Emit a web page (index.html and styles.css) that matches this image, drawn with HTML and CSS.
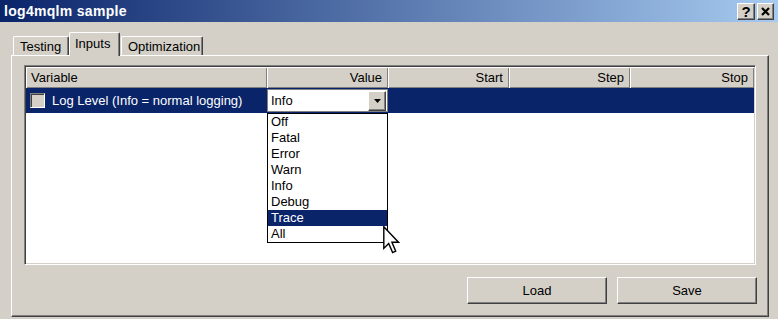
FILE: index.html
```html
<!DOCTYPE html>
<html>
<head>
<meta charset="utf-8">
<link rel="stylesheet" href="styles.css">
</head>
<body>
<div class="window">
  <div class="titlebar">
    <span class="title">log4mqlm sample</span>
    <div class="tb-buttons">
      <div class="tb-btn help">?</div>
      <div class="tb-btn close">
        <svg width="9" height="9" viewBox="0 0 9 9"><path d="M1 1 L8 8 M8 1 L1 8" stroke="#000" stroke-width="2.2"/></svg>
      </div>
    </div>
  </div>
  <div class="client">
    <div class="tabs">
      <div class="tab t-testing">Testing</div>
      <div class="tab active t-inputs">Inputs</div>
      <div class="tab t-opt">Optimization</div>
    </div>
    <div class="panel">
      <div class="listview">
        <div class="header">
          <div class="hcell left">Variable</div>
          <div class="hcell">Value</div>
          <div class="hcell">Start</div>
          <div class="hcell">Step</div>
          <div class="hcell">Stop</div>
        </div>
        <div class="row selected">
          <div class="cell var">
            <span class="checkbox"></span>
            <span>Log Level (Info = normal logging)</span>
          </div>
          <div class="cell val">
            <div class="combo">
              <span class="combo-text">Info</span>
              <span class="combo-btn">
                <svg width="7" height="4" viewBox="0 0 7 4"><path d="M0 0 H7 L3.5 4 Z" fill="#000"/></svg>
              </span>
            </div>
            <ul class="droplist">
              <li>Off</li>
              <li>Fatal</li>
              <li>Error</li>
              <li>Warn</li>
              <li>Info</li>
              <li>Debug</li>
              <li class="hl">Trace</li>
              <li>All</li>
            </ul>
            <svg class="cursor" width="17" height="28" viewBox="0 0 12 20">
              <path d="M0.5 0.5 L0.5 16 L4 12.5 L6.8 19 L9 18 L6.3 11.6 L11 11.6 Z" fill="#fff" stroke="#000" stroke-width="1" stroke-linejoin="miter"/>
            </svg>
          </div>
          <div class="cell"></div>
          <div class="cell"></div>
          <div class="cell"></div>
        </div>
      </div>
      <div class="buttons">
        <div class="button">Load</div>
        <div class="button">Save</div>
      </div>
    </div>
  </div>
</div>
</body>
</html>
```
FILE: styles.css
```css
* { box-sizing: border-box; }
html, body { margin: 0; padding: 0; }
body {
  font-family: "Liberation Sans", Arial, sans-serif;
  font-size: 13px;
  color: #000;
  background: #d4d0c8;
}
.window {
  width: 778px;
  height: 319px;
  background: #d4d0c8;
  display: flex;
  flex-direction: column;
  overflow: hidden;
}
.titlebar {
  height: 22px;
  flex: none;
  background: linear-gradient(to right, #0a246a 0%, #a6caf0 100%);
  display: flex;
  align-items: center;
  justify-content: space-between;
  padding: 0 4px 0 4px;
}
.title {
  color: #fff;
  font-weight: bold;
  font-size: 14px;
  letter-spacing: 0.3px;
}
.tb-buttons {
  display: flex;
  gap: 2px;
}
.tb-btn {
  width: 18px;
  height: 17px;
  background: #d4d0c8;
  border-top: 1px solid #fff;
  border-left: 1px solid #fff;
  border-right: 1px solid #404040;
  border-bottom: 1px solid #404040;
  box-shadow: inset -1px -1px 0 #808080;
  display: flex;
  align-items: center;
  justify-content: center;
  font-weight: bold;
  font-size: 15px;
  line-height: 1;
}
.tb-btn.close { width: 17px; }
.client {
  flex: 1;
  padding: 10px 9px 2px 11px;
  display: flex;
  flex-direction: column;
}
.tabs {
  height: 23px;
  flex: none;
  display: flex;
  align-items: flex-end;
  padding-left: 2px;
}
.tab {
  height: 19px;
  background: #d4d0c8;
  border-top: 1px solid #fff;
  border-left: 1px solid #fff;
  border-right: 1px solid #404040;
  box-shadow: inset -1px 0 0 #808080;
  border-radius: 2px 2px 0 0;
  padding: 2px 0 0 6px;
  white-space: nowrap;
}
.t-testing { width: 56px; }
.t-inputs { width: 51px; }
.t-opt { width: 82px; margin-left: 1px; }
.tab.active {
  height: 24px;
  margin-bottom: -1px;
  position: relative;
  z-index: 2;
  padding-top: 3px;
  padding-left: 5px;
}
.panel {
  flex: 1;
  border-top: 1px solid #fff;
  border-left: 1px solid #fff;
  border-right: 1px solid #404040;
  border-bottom: 1px solid #404040;
  box-shadow: inset -1px -1px 0 #808080;
  padding: 9px 12px 12px 12px;
  display: flex;
  flex-direction: column;
}
.listview {
  height: 200px;
  flex: none;
  background: #fff;
  border-top: 1px solid #808080;
  border-left: 1px solid #808080;
  border-right: 1px solid #fff;
  border-bottom: 1px solid #fff;
  box-shadow: inset 1px 1px 0 #404040, inset -1px -1px 0 #d4d0c8;
  padding: 1px;
}
.header, .row {
  display: grid;
  grid-template-columns: 241px 121px 121px 121px 124px;
}
.header { height: 21px; }
.hcell {
  background: #d4d0c8;
  box-shadow: inset 1px 1px 0 #fff, inset -1px -1px 0 #808080;
  text-align: right;
  padding: 3px 6px 0 6px;
  white-space: nowrap;
}
.hcell.left { text-align: left; padding-left: 5px; }
.row { height: 25px; }
.row.selected { background: #0a246a; color: #fff; }
.cell { display: flex; align-items: center; }
.cell.var { padding-left: 4px; gap: 7px; white-space: nowrap; }
.checkbox {
  width: 15px;
  height: 15px;
  background: #d4d0c8;
  border-top: 1px solid #808080;
  border-left: 1px solid #808080;
  border-right: 1px solid #fff;
  border-bottom: 1px solid #fff;
  box-shadow: inset 1px 1px 0 #404040, inset -1px -1px 0 #d4d0c8;
  flex: none;
}
.cell.val { position: relative; }
.combo {
  width: 121px;
  height: 23px;
  background: #fff;
  color: #000;
  border: 1px solid #808080;
  display: flex;
  align-items: center;
  justify-content: space-between;
  padding: 0 1px 0 3px;
}
.combo-btn {
  width: 18px;
  height: 20px;
  background: #d4d0c8;
  border-top: 1px solid #fff;
  border-left: 1px solid #fff;
  border-right: 1px solid #404040;
  border-bottom: 1px solid #404040;
  box-shadow: inset -1px -1px 0 #808080;
  display: flex;
  align-items: center;
  justify-content: center;
}
.droplist {
  position: absolute;
  left: 0;
  top: 25px;
  width: 121px;
  margin: 0;
  padding: 0;
  list-style: none;
  background: #fff;
  color: #000;
  border: 1px solid #000;
  z-index: 5;
}
.droplist li {
  height: 16px;
  line-height: 16px;
  padding-left: 3px;
}
.droplist li.hl { background: #0a246a; color: #fff; }
.cursor {
  position: absolute;
  left: 116px;
  top: 138px;
  z-index: 6;
}
.buttons {
  margin-top: 12px;
  display: flex;
  justify-content: flex-end;
  gap: 10px;
  margin-right: -1px;
}
.button {
  width: 140px;
  height: 27px;
  background: #d4d0c8;
  border-top: 1px solid #fff;
  border-left: 1px solid #fff;
  border-right: 1px solid #404040;
  border-bottom: 1px solid #404040;
  box-shadow: inset -1px -1px 0 #808080;
  display: flex;
  align-items: center;
  justify-content: center;
}
```
